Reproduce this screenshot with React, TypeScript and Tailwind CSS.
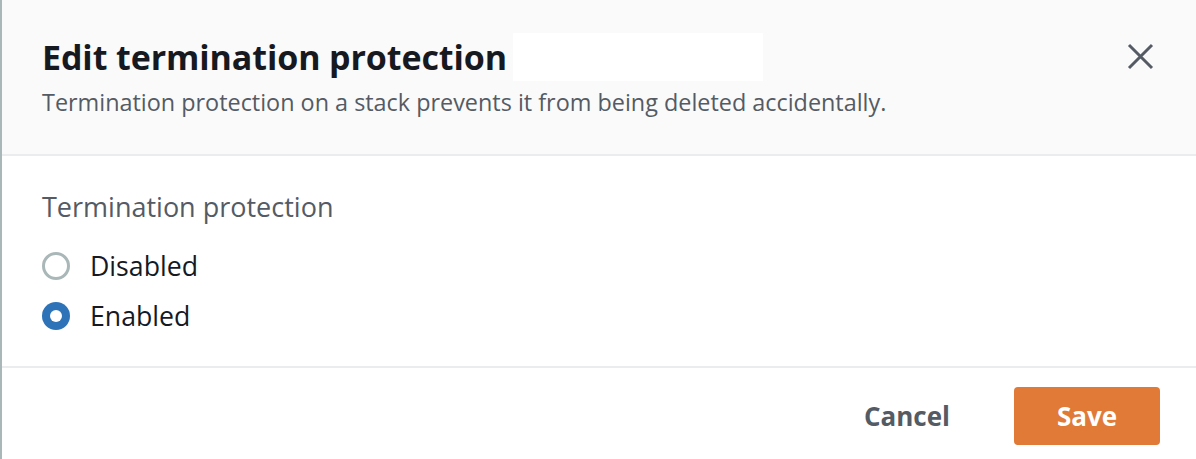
export default function App() {
  return (
    <div
      className="w-[1196px] h-[459px] bg-white border-l-2 border-[#aab7b8] flex flex-col overflow-hidden text-[#16191f]"
      style={{ fontFamily: '"Open Sans", Arial, sans-serif' }}
    >
      <div className="h-[156px] shrink-0 bg-[#fafafa] border-b-2 border-[#eaeded] flex items-start justify-between pl-[40px] pr-[42px]">
        <div className="pt-[33px]">
          <div className="flex items-center h-[48px]">
            <h1 className="text-[34px] font-bold tracking-[-0.1px] leading-none">Edit termination protection</h1>
            <div className="ml-[6px] w-[250px] h-[48px] bg-white" />
          </div>
          <p className="mt-[7px] text-[23.4px] text-[#545b64] leading-[28px]">
            Termination protection on a stack prevents it from being deleted accidentally.
          </p>
        </div>
        <button className="mt-[43px] w-[27px] h-[27px] flex items-center justify-center text-[#545b64]">
          <svg viewBox="0 0 27 27" className="w-[27px] h-[27px]" fill="none" stroke="currentColor" strokeWidth={3}>
            <path d="M2 2l23 23M25 2L2 25" />
          </svg>
        </button>
      </div>

      <div className="h-[212px] shrink-0 border-b-2 border-[#eaeded] pl-[40px] pt-[35px]">
        <div className="text-[27px] text-[#545b64] leading-[32px]">Termination protection</div>
        <div className="mt-[27px] flex flex-col gap-[18px]">
          <label className="flex items-center gap-[20px] h-[32px]">
            <span className="w-[28px] h-[28px] rounded-full border-[3px] border-[#aab7b8] bg-white" />
            <span className="text-[26.7px] leading-none">Disabled</span>
          </label>
          <label className="flex items-center gap-[20px] h-[32px]">
            <span className="w-[28px] h-[28px] rounded-full bg-[#2e73b8] flex items-center justify-center">
              <span className="w-[12px] h-[12px] rounded-full bg-white" />
            </span>
            <span className="text-[26.7px] leading-none">Enabled</span>
          </label>
        </div>
      </div>

      <div className="flex-1 flex items-start justify-end pr-[36px] pt-[19px] gap-[64px]">
        <button className="h-[58px] text-[26px] font-bold text-[#545b64]">Cancel</button>
        <button className="w-[146px] h-[58px] rounded-[4px] bg-[#e07a36] text-[26px] font-bold text-white">Save</button>
      </div>
    </div>
  )
}
